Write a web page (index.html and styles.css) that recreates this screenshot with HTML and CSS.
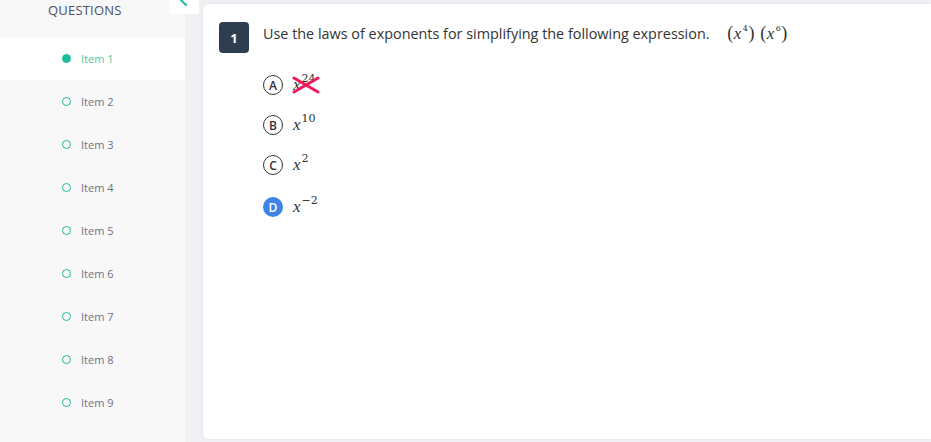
FILE: index.html
```html
<!DOCTYPE html>
<html lang="en">
<head>
    <meta charset="UTF-8">
    <meta name="viewport" content="width=device-width, initial-scale=1.0">
    <title>Quiz</title>
    <link rel="stylesheet" href="styles.css">
</head>
<body>
    <div class="layout">
        <aside class="sidebar">
            <div class="sidebar-title">QUESTIONS</div>
            <ul class="item-list">
                <li class="item active"><span class="dot"></span>Item 1</li>
                <li class="item"><span class="dot"></span>Item 2</li>
                <li class="item"><span class="dot"></span>Item 3</li>
                <li class="item"><span class="dot"></span>Item 4</li>
                <li class="item"><span class="dot"></span>Item 5</li>
                <li class="item"><span class="dot"></span>Item 6</li>
                <li class="item"><span class="dot"></span>Item 7</li>
                <li class="item"><span class="dot"></span>Item 8</li>
                <li class="item"><span class="dot"></span>Item 9</li>
            </ul>
            <!-- collapse toggle -->
            <div class="toggle">
                <svg width="30" height="30" viewBox="0 0 30 30">
                    <path d="M17 10 L11 15 L17 21" fill="none" stroke="#1abc9c" stroke-width="2" stroke-linecap="round"/>
                </svg>
            </div>
        </aside>

        <main class="main">
            <div class="card">
                <div class="question">
                    <div class="badge">1</div>
                    <div class="question-text">
                        Use the laws of exponents for simplifying the following expression.
                        <span class="math expr"><span class="paren">(</span><i>x</i><sup>4</sup><span class="paren">)</span>&nbsp;<span class="paren">(</span><i>x</i><sup>6</sup><span class="paren">)</span></span>
                    </div>
                </div>

                <ul class="options">
                    <li class="option wrong">
                        <span class="letter">A</span>
                        <span class="math"><i>x</i><sup>24</sup>
                            <svg class="cross" width="28" height="18" viewBox="0 0 28 18">
                                <path d="M2 2 L26 16 M26 2 L2 16" stroke="#f0195a" stroke-width="3" stroke-linecap="round"/>
                            </svg>
                        </span>
                    </li>
                    <li class="option">
                        <span class="letter">B</span>
                        <span class="math"><i>x</i><sup>10</sup></span>
                    </li>
                    <li class="option">
                        <span class="letter">C</span>
                        <span class="math"><i>x</i><sup>2</sup></span>
                    </li>
                    <li class="option selected">
                        <span class="letter">D</span>
                        <span class="math"><i>x</i><sup>&minus;2</sup></span>
                    </li>
                </ul>
            </div>
        </main>
    </div>
</body>
</html>
```

FILE: styles.css
```css
body {
    margin: 0;
    padding: 0;
    font-family: "Open Sans", "Liberation Sans", sans-serif;
    color: #333;
    overflow: hidden;
}

.layout {
    display: flex;
    height: 442px;
}

.sidebar {
    position: relative;
    width: 185px;
    flex-shrink: 0;
    background-color: #f8f8f9;
}

.sidebar-title {
    height: 37px;
    box-sizing: border-box;
    padding: 1px 0 0 48px;
    font-size: 13px;
    letter-spacing: 0.2px;
    color: #4b4f5f;
}

.item-list {
    list-style-type: none;
    margin: 0;
    padding: 0;
}

.item {
    display: flex;
    align-items: center;
    height: 43px;
    padding-left: 62px;
    font-size: 11px;
    color: #70737e;
}

.item.active {
    background-color: #fff;
    color: #48c9a4;
}

.dot {
    width: 7px;
    height: 7px;
    border: 1.5px solid #1abc9c;
    border-radius: 50%;
    margin-right: 10px;
}

.item.active .dot {
    background-color: #1abc9c;
}

.toggle {
    position: absolute;
    top: -16px;
    left: 169px;
    width: 30px;
    height: 30px;
    background-color: #fff;
    border-radius: 3px;
}

.main {
    flex: 1;
    background-color: #f1f0f5;
    padding: 4px 0 3px 18px;
    display: flex;
}

.card {
    flex: 1;
    background-color: #fff;
    border-radius: 6px 0 0 6px;
    box-shadow: 0 0 4px rgba(0, 0, 0, 0.05);
    padding: 18px 16px;
}

.question {
    display: flex;
    align-items: flex-start;
}

.badge {
    width: 30px;
    height: 31px;
    border-radius: 4px;
    background-color: #2e3e50;
    color: #fff;
    font-size: 13px;
    font-weight: 700;
    display: flex;
    align-items: center;
    justify-content: center;
    margin-right: 14px;
}

.question-text {
    font-size: 14.4px;
    line-height: 22px;
    color: #333;
}

.math {
    font-family: "DejaVu Serif", "Liberation Serif", serif;
    font-size: 15px;
    color: #333;
}

.math i {
    font-family: "Liberation Serif", serif;
    font-size: 17px;
}

.math sup {
    font-size: 11px;
    vertical-align: 8px;
    line-height: 0;
    margin-left: 1px;
}

.expr {
    margin-left: 14px;
    letter-spacing: 0.5px;
}

.expr sup {
    font-size: 8px;
}

.paren {
    font-size: 18px;
    font-family: "Liberation Serif", serif;
}

.options {
    list-style-type: none;
    margin: 12px 0 0;
    padding: 0 0 0 44px;
}

.option {
    display: flex;
    align-items: center;
    height: 40px;
}

.option:last-child {
    margin-top: 2px;
}

.letter {
    width: 18px;
    height: 18px;
    border: 1px solid #333;
    border-radius: 50%;
    display: flex;
    align-items: center;
    justify-content: center;
    font-size: 12px;
    font-weight: 600;
    margin-right: 10px;
}

.option.selected .letter {
    width: 20px;
    height: 20px;
    border: none;
    background-color: #3d84e6;
    color: #fff;
}

.option.wrong .math {
    position: relative;
}

.cross {
    position: absolute;
    left: -1px;
    top: 1px;
}
```
